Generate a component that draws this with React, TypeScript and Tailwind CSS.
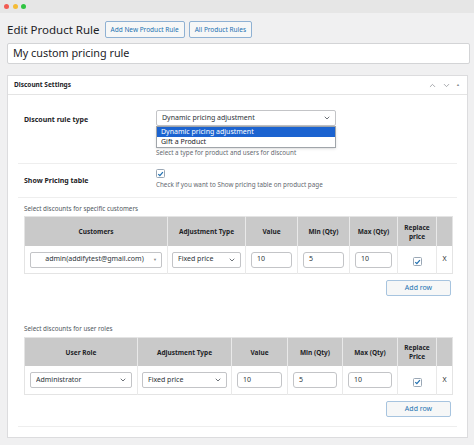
import { ChevronDown, ChevronUp } from 'lucide-react'

type Col = { label: string; w: string }

const customerCols: Col[] = [
  { label: 'Customers', w: 'w-[143px]' },
  { label: 'Adjustment Type', w: 'w-[78px]' },
  { label: 'Value', w: 'w-[52px]' },
  { label: 'Min (Qty)', w: 'w-[52px]' },
  { label: 'Max (Qty)', w: 'w-[48px]' },
  { label: 'Replace price', w: 'w-[39px]' },
  { label: '', w: 'w-[16px]' },
]

const roleCols: Col[] = [
  { label: 'User Role', w: 'w-[113px]' },
  { label: 'Adjustment Type', w: 'w-[94px]' },
  { label: 'Value', w: 'w-[56px]' },
  { label: 'Min (Qty)', w: 'w-[55px]' },
  { label: 'Max (Qty)', w: 'w-[55px]' },
  { label: 'Replace Price', w: 'w-[39px]' },
  { label: '', w: 'w-[16px]' },
]

function Check() {
  return (
    <span className="inline-flex w-[9px] h-[9px] items-center justify-center border border-[#9aa7b5] rounded-[1.5px] bg-white">
      <svg viewBox="0 0 10 10" className="w-[8px] h-[8px]">
        <path d="M1.8 5.2 L4.1 7.4 L8.4 2.4" fill="none" stroke="#2271b1" strokeWidth="1.8" />
      </svg>
    </span>
  )
}

function SelectBox({ text, center, arrow = 'chev', className = '' }: { text: string; center?: boolean; arrow?: 'chev' | 'tri'; className?: string }) {
  return (
    <div className={`flex items-center border border-[#c3c4c7] rounded-[2px] bg-white text-[7px] text-[#2c3338] pl-[5px] pr-[4px] ${className}`}>
      <span className={`flex-1 truncate ${center ? 'text-center' : ''}`}>{text}</span>
      {arrow === 'chev' ? (
        <ChevronDown className="w-[8px] h-[8px] text-[#50575e]" strokeWidth={2.5} />
      ) : (
        <span className="text-[4px] text-[#888]">▼</span>
      )}
    </div>
  )
}

function Field({ value }: { value: string }) {
  return (
    <div className="h-[16px] flex items-center border border-[#c3c4c7] rounded-[3px] bg-white text-[7px] text-[#2c3338] pl-[5px]">
      {value}
    </div>
  )
}

function AddRow() {
  return (
    <div className="flex justify-end mt-[6px]">
      <button className="w-[65px] h-[16px] text-[7px] text-[#2271b1] bg-[#f6f7f7] border border-[#a7c4df] rounded-[2px]">
        Add row
      </button>
    </div>
  )
}

function DiscountTable({ cols, first, firstCenter, firstArrow }: { cols: Col[]; first: string; firstCenter?: boolean; firstArrow: 'chev' | 'tri' }) {
  return (
    <table className="w-[428px] table-fixed border-collapse border border-[#e4e4e4]">
      <thead>
        <tr className="h-[29px] bg-[#c9c9c9]">
          {cols.map((c, i) => (
            <th key={i} className={`${c.w} border-r border-[#e9e9e9] last:border-r-0 text-[6.5px] font-bold text-[#1d2327] leading-[9px] px-[3px]`}>
              {c.label === 'Replace price' || c.label === 'Replace Price' ? (
                <>
                  Replace
                  <br />
                  {c.label.split(' ')[1]}
                </>
              ) : (
                c.label
              )}
            </th>
          ))}
        </tr>
      </thead>
      <tbody>
        <tr className="h-[28px] bg-white">
          <td className="border-r border-[#e9e9e9] px-[5px]">
            <SelectBox text={first} center={firstCenter} arrow={firstArrow} className="h-[16px]" />
          </td>
          <td className="border-r border-[#e9e9e9] px-[4px]">
            <SelectBox text="Fixed price" className="h-[16px]" />
          </td>
          <td className="border-r border-[#e9e9e9] px-[5px]">
            <Field value="10" />
          </td>
          <td className="border-r border-[#e9e9e9] px-[5px]">
            <Field value="5" />
          </td>
          <td className="border-r border-[#e9e9e9] px-[5px]">
            <Field value="10" />
          </td>
          <td className="border-r border-[#e9e9e9] text-center">
            <Check />
          </td>
          <td className="text-center text-[7px] text-[#1d2327]">X</td>
        </tr>
      </tbody>
    </table>
  )
}

export default function App() {
  return (
    <div className="w-[474px] h-[445px] overflow-hidden bg-[#f0f0f1] font-['Noto_Sans',sans-serif] text-[#1d2327]">
      <div className="h-[13px] bg-[#e6e6e6] flex items-center gap-[3.5px] pl-[4px]">
        <span className="w-[5px] h-[5px] rounded-full bg-[#f25b52]" />
        <span className="w-[5px] h-[5px] rounded-full bg-[#f4bb35]" />
        <span className="w-[5px] h-[5px] rounded-full bg-[#2fc441]" />
      </div>

      <div className="pl-[7px] pr-[4px] pt-[8px]">
        <div className="flex items-center h-[17px]">
          <h1 className="text-[11.5px] leading-none text-[#1d2327] mr-[5px]">Edit Product Rule</h1>
          <button className="h-[17px] px-[5px] text-[6.5px] text-[#2271b1] bg-[#f6f7f7] border border-[#8fb1d3] rounded-[2px] mr-[4px]">
            Add New Product Rule
          </button>
          <button className="h-[17px] px-[5px] text-[6.5px] text-[#2271b1] bg-[#f6f7f7] border border-[#8fb1d3] rounded-[2px]">
            All Product Rules
          </button>
        </div>

        <div className="mt-[5px] h-[21px] bg-white border border-[#d3d4d6] rounded-[2px] flex items-center pl-[5px] text-[10.8px] text-[#1d2327]">
          My custom pricing rule
        </div>

        <div className="mt-[11px] w-[461px] h-[363px] bg-white border border-[#dcdcde]">
          <div className="h-[19px] border-b border-[#e4e4e4] flex items-center pl-[6px] pr-[7px]">
            <span className="flex-1 text-[6.5px] font-bold">Discount Settings</span>
            <div className="flex items-center gap-[5px] text-[#8c8f94]">
              <ChevronUp className="w-[9px] h-[9px]" strokeWidth={2} />
              <ChevronDown className="w-[9px] h-[9px]" strokeWidth={2} />
              <span className="text-[4px]">▲</span>
            </div>
          </div>

          <div className="px-[10px]">
            <div className="h-[69px] border-b border-[#eeeeee] flex px-[6px] pt-[15px]">
              <div className="w-[132px] pt-[5px] text-[7px] font-bold">Discount rule type</div>
              <div className="relative w-[180px]">
                <SelectBox text="Dynamic pricing adjustment" className="h-[16px] border-[#2271b1]" />
                <div className="mt-[22px] text-[6.3px] text-[#646970]">Select a type for product and users for discount</div>
                <div className="absolute left-0 top-[16px] w-[180px] bg-white border border-[#a0a5aa] text-[7px] shadow-sm">
                  <div className="h-[10px] leading-[10px] pl-[4px] bg-[#1b63d0] text-white">Dynamic pricing adjustment</div>
                  <div className="h-[10px] leading-[10px] pl-[4px] text-[#1d2327]">Gift a Product</div>
                </div>
              </div>
            </div>

            <div className="h-[34px] border-b border-[#eeeeee] flex items-center px-[6px]">
              <div className="w-[132px] text-[7px] font-bold pt-[2px]">Show Pricing table</div>
              <div className="flex flex-col pb-[2px]">
                <Check />
                <span className="mt-[2px] text-[6.3px] text-[#646970]">Check if you want to Show pricing table on product page</span>
              </div>
            </div>

            <div className="px-[6px]">
              <div className="mt-[6px] mb-[3px] text-[6.3px] text-[#50575e]">Select discounts for specific customers</div>
              <DiscountTable cols={customerCols} first="admin(addifytest@gmail.com)" firstCenter firstArrow="tri" />
              <AddRow />

              <div className="mt-[28px] mb-[3px] text-[6.3px] text-[#50575e]">Select discounts for user roles</div>
              <DiscountTable cols={roleCols} first="Administrator" firstArrow="chev" />
              <AddRow />
            </div>
            <div className="mt-[9px] border-b border-[#eeeeee]" />
          </div>
        </div>
      </div>
    </div>
  )
}
